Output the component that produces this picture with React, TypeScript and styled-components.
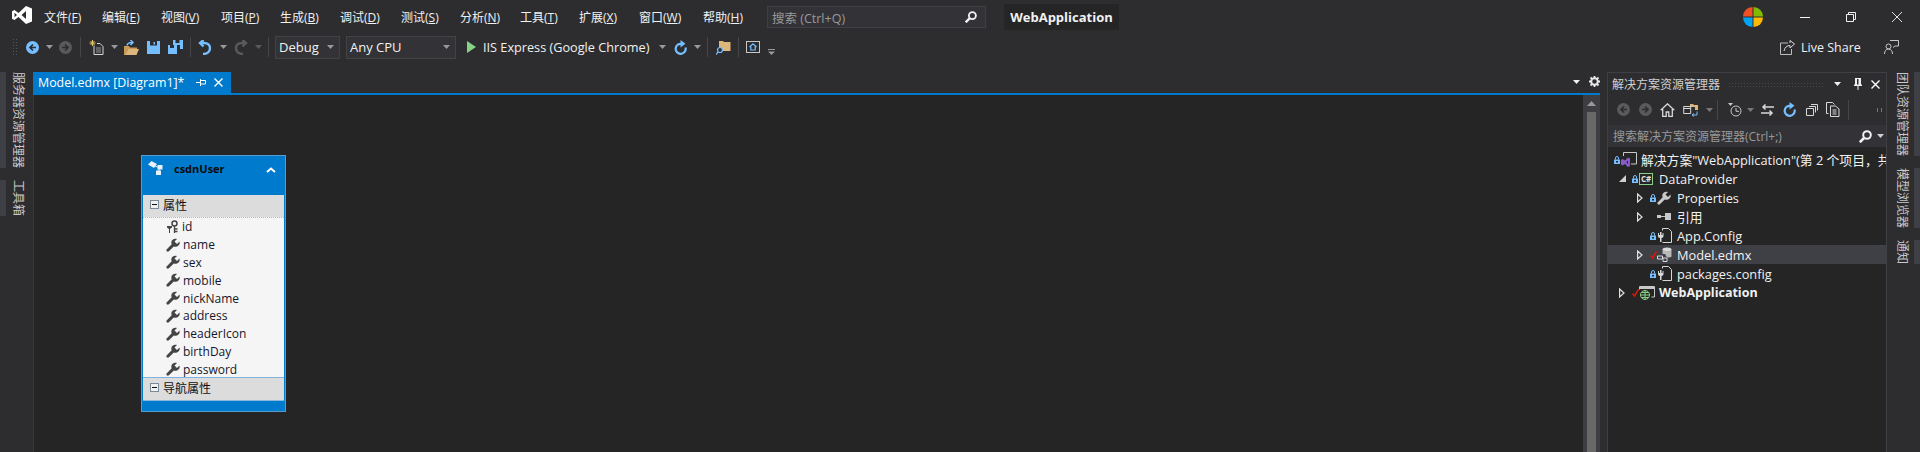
import React from "react";
import styled, { createGlobalStyle } from "styled-components";

const Global = createGlobalStyle`
  html, body { margin: 0; padding: 0; background: #2d2d30; overflow: hidden; }
  body { font-family: "Open Sans", "Noto Sans CJK SC", sans-serif; }
  * { box-sizing: border-box; }
`;

const ui = `"Open Sans", "Noto Sans CJK SC", sans-serif`;

const Window = styled.div`
  width: 1920px; height: 452px; display: flex; flex-direction: column;
  background: #2d2d30; color: #f1f1f1; overflow: hidden; font: 12px ${ui};
`;

const TitleBar = styled.div`
  height: 34px; display: flex; align-items: center; padding-left: 12px; flex: none;
`;
const LogoSlot = styled.div`display: flex; width: 32px; flex: none; margin-top: -4px;`;
const Menu = styled.nav`display: flex; gap: 0; width: 723px; flex: none;`;
const MenuItem = styled.span<{ $w: number }>`
  width: ${(p) => p.$w}px; flex: none; font-size: 12px; color: #f1f1f1; white-space: nowrap;
  u { text-underline-offset: 1px; }
`;
const SearchBox = styled.div`
  width: 219px; height: 22px; flex: none; border: 1px solid #3f3f46; background: #333337;
  display: flex; align-items: center; justify-content: space-between; padding: 0 8px 0 4px;
  color: #999; font-size: 12.5px;
`;
const SolutionName = styled.div`
  margin-left: 18px; width: 115px; height: 26px; background: #252526; flex: none;
  display: flex; align-items: center; justify-content: center;
  font-weight: 700; font-size: 13px; color: #f1f1f1;
`;
const TitleRight = styled.div`margin-left: auto; display: flex; align-items: center;`;
const LogoGap = styled.div`margin-right: 19px; display: flex;`;
const Win = styled.div`width: 46px; display: flex; justify-content: center; flex: none;`;

const ToolBar = styled.div`
  height: 26px; flex: none; display: flex; align-items: center; padding-left: 12px;
`;
const Grip = styled.div`
  width: 5px; height: 18px; margin-right: 9px; flex: none;
  background-image: radial-gradient(#55555a 1px, transparent 1px);
  background-size: 3px 3px;
`;
const Tool = styled.div<{ $w: number; $ml?: number; $dy?: number }>`
  width: ${(p) => p.$w}px; margin-left: ${(p) => p.$ml ?? 0}px; flex: none; height: 22px;
  display: flex; align-items: center; justify-content: center;
  padding-top: ${(p) => p.$dy ?? 0}px;
`;
const Sep = styled.div<{ $l: number; $r: number }>`
  width: 1px; height: 20px; background: #46464a; flex: none;
  margin: 0 ${(p) => p.$r}px 0 ${(p) => p.$l}px;
`;
const Combo = styled.div<{ $w: number; $ml?: number }>`
  width: ${(p) => p.$w}px; height: 23px; flex: none; margin-left: ${(p) => p.$ml ?? 0}px;
  border: 1px solid #434346; background: #333337; display: flex; align-items: center;
  justify-content: space-between; padding: 0 5px 0 3px; font-size: 13px; color: #f1f1f1;
`;
const RunLabel = styled.span`font-size: 12.7px; color: #f1f1f1; white-space: nowrap; margin-left: 7px; width: 171px; flex: none;`;
const LiveBar = styled.div`
  margin-left: auto; display: flex; align-items: center; font-size: 12.5px; color: #f1f1f1;
`;
const LiveText = styled.span`margin: 0 25px 0 6px; width: 58px; white-space: nowrap;`;
const LiveEnd = styled.div`width: 21px; display: flex; flex: none;`;

const Main = styled.div`flex: 1; display: flex; min-height: 0; padding-top: 12px;`;

const Rail = styled.div<{ $right?: boolean }>`
  width: 33px; flex: none; display: flex; flex-direction: column; gap: 12px;
  align-items: ${(p) => (p.$right ? "flex-end" : "flex-start")};
`;
const RailTab = styled.div<{ $right?: boolean }>`
  writing-mode: vertical-rl; text-orientation: sideways;
  font-size: 12px; line-height: 12px; color: #c8c8c8;
  ${(p) =>
    p.$right
      ? `border-right: 6px solid #3f3f46; padding-right: 6px;`
      : `border-left: 6px solid #3f3f46; padding-left: 6px;`}
  align-self: ${(p) => (p.$right ? "flex-end" : "flex-start")};
  white-space: nowrap;
`;

const DocColumn = styled.div`width: 1567px; flex: none; display: flex; flex-direction: column;`;
const TabStrip = styled.div`
  height: 23px; flex: none; display: flex; align-items: stretch; justify-content: space-between;
  border-bottom: 2px solid #007acc;
`;
const DocTab = styled.div`
  width: 198px; height: 23px; background: #007acc; display: flex; align-items: center;
  padding: 0 0 2px 5px; font-size: 12.4px; color: #ffffff; white-space: nowrap; flex: none;
`;
const TabTitle = styled.span`width: 153px; flex: none;`;
const TabBtn = styled.span<{ $w: number }>`width: ${(p) => p.$w}px; flex: none; display: flex; justify-content: center;`;
const StripTools = styled.div`display: flex; align-items: center; padding: 0 0 2px 0; gap: 9px;`;

const DocBody = styled.div`flex: 1; display: flex; min-height: 0;`;
const Canvas = styled.div`
  flex: 1; background: #252526; position: relative; border-left: 1px solid #3a3a3d;
`;
const ScrollTrack = styled.div`
  width: 17px; flex: none; background: #3e3e42; display: flex; flex-direction: column; align-items: center;
`;
const ScrollArrow = styled.div`height: 17px; flex: none; display: flex; align-items: center; justify-content: center;`;
const ScrollThumb = styled.div`width: 9px; flex: 1; background: #686868;`;

const Entity = styled.div`
  position: absolute; left: 107px; top: 60px; width: 145px; height: 257px;
  background: #007acc; border: 1px solid #569ccf; padding: 0 1px; display: flex; flex-direction: column;
`;
const EntityHead = styled.div`
  height: 39px; flex: none; display: flex; align-items: flex-start; padding: 5px 8px 0 5px;
  color: #0a0a0a; font-weight: 700; font-size: 11px;
`;
const EntityName = styled.span`margin-left: 11px; line-height: 15px; flex: 1;`;
const ChevronSlot = styled.span`margin-top: 6px; display: flex;`;
const Section = styled.div<{ $h: number }>`
  height: ${(p) => p.$h}px; flex: none; background: #dcdcdc; display: flex; align-items: center;
  padding: 0 0 3px 7px; color: #111; font-size: 12px; gap: 4px;
`;
const SectionBottom = styled(Section)`
  border-top: 1px solid #7fb3dc; border-bottom: 1px solid #88b7dc;
`;
const Props = styled.div`
  flex: none; height: 160px; background: #f5f5f5; border-top: 1px dotted #b5b5b5;
`;
const Prop = styled.div`
  height: 17.8px; display: flex; align-items: center; padding-left: 23px; gap: 3px;
  color: #15152a; font-size: 12px; white-space: nowrap;
`;

const Panel = styled.div`
  width: 280px; margin-left: 7px; flex: none; background: #252526; border: 1px solid #3f3f46;
  border-bottom: none; display: flex; flex-direction: column;
`;
const PanelHead = styled.div`
  height: 21px; flex: none; background: #2d2d30; display: flex; align-items: center;
  padding: 1px 6px 0 4px; font-size: 12px; color: #d0d0d0;
`;
const PanelDots = styled.div`
  flex: 1; height: 5px; margin: 0 10px 0 8px;
  background-image: radial-gradient(#47474b 0.7px, transparent 0.8px);
  background-size: 3px 3px;
`;
const PanelTools = styled.div`
  height: 31px; flex: none; background: #2d2d30; display: flex; align-items: center; padding-left: 9px;
`;
const Overflow = styled.div`margin-left: auto; margin-right: 4px; display: flex; gap: 3px;`;
const OverflowMark = styled.span`width: 1px; height: 4px; background: #77777a;`;
const PanelSearch = styled.div`
  height: 22px; flex: none; background: #333337; display: flex; align-items: center; justify-content: space-between;
  padding-left: 5px; font-size: 12px; color: #999;
`;
const SearchEnd = styled.div`display: flex; align-items: center; gap: 5px; padding-right: 2px;`;
const Tree = styled.div`flex: 1; padding-top: 3px; overflow: hidden;`;
const Row = styled.div<{ $sel?: boolean; $indent: number }>`
  height: 19px; display: flex; align-items: center; padding-left: ${(p) => p.$indent}px;
  background: ${(p) => (p.$sel ? "#3f3f46" : "transparent")}; white-space: nowrap;
  color: #f1f1f1; overflow: hidden;
`;
const Arrow = styled.span`width: 13px; flex: none; display: flex; justify-content: flex-start;`;
const StateIcon = styled.span`width: 7px; flex: none; display: flex; justify-content: flex-start;`;
const NodeIcon = styled.span`width: 18px; flex: none; display: flex; justify-content: flex-start; margin-right: 2px;`;
const RowText = styled.span<{ $bold?: boolean }>`
  font-size: ${(p) => (p.$bold ? 12.5 : 12.8)}px; font-weight: ${(p) => (p.$bold ? 700 : 400)};
`;

const blue = "#75beff";

const VsLogo = () => (
  <svg width="20" height="18" viewBox="0 0 20 18">
    <path fill="#fff" fillRule="evenodd" d="M14 0l6 2.5v13L14 18l-7.500-7-4 3L0 12.700V5.300L2.500 4l4 3zM2.500 6.700v4.600L5 9zM14 5 9.500 9l4.500 4z" />
  </svg>
);
const Caret = ({ c = "#999" }: { c?: string }) => (
  <svg width="7" height="4" viewBox="0 0 7 4"><path fill={c} d="M0 0h7L3.500 4z" /></svg>
);
const Back = ({ flip, dim }: { flip?: boolean; dim?: boolean }) => (
  <svg width="13" height="13" viewBox="0 0 13 13" style={flip ? { transform: "scaleX(-1)" } : undefined}>
    <circle cx="6.500" cy="6.500" r="6.500" fill={dim ? "#5a5a5d" : blue} />
    <path d="M7 3.500 4 6.500l3 3M4.300 6.500H10" stroke="#2d2d30" strokeWidth="1.700" fill="none" />
  </svg>
);
const NewProj = () => (
  <svg width="15" height="15" viewBox="0 0 15 15" fill="none">
    <path d="M5 5.500V14.500h9V6.500L11 3.500H8" stroke="#d8d8d8" />
    <path d="M7 8h5M7 10h5M7 12h5" stroke="#999" />
    <path d="M3.500 0v6M.5 3h6M1.500 1l4 4M5.500 1l-4 4" stroke="#e8c46a" />
  </svg>
);
const OpenFolder = () => (
  <svg width="15" height="15" viewBox="0 0 15 15">
    <path fill="#c79a55" d="M0 6h5l1 1.500h7V9H4l-2 6H0z" />
    <path fill="#dcb67a" d="M4 9h11l-2.500 6H1.500z" />
    <path d="M3 5.500C3.500 3 5 2.500 8 2.500M6.500 0l2.500 2.500L6.500 5" stroke={blue} strokeWidth="1.500" fill="none" />
  </svg>
);
const Save = () => (
  <svg width="13" height="13" viewBox="0 0 13 13">
    <path fillRule="evenodd" fill={blue} d="M0 0h13v13H0zM3 0v4.500h7V0zM6.500 1H8v2.500H6.500z" />
  </svg>
);
const SaveAll = () => (
  <svg width="15" height="14" viewBox="0 0 15 14">
    <path fillRule="evenodd" fill={blue} d="M5 0h10v9h-3V5H5zM7.500 0v3h4V0zM0 5h9v9H0zM2 5v3h4V5z" />
  </svg>
);
const Undo = ({ dim }: { dim?: boolean }) => (
  <svg width="14" height="15" viewBox="0 0 14 15" fill="none" style={dim ? { transform: "scaleX(-1)" } : undefined}>
    <path d="M5 14c5 0 7-3 7-6S10 3 6 3H2M5.500 0 2 3l3.500 3.500" stroke={dim ? "#5a5a5d" : blue} strokeWidth="2.400" />
  </svg>
);
const Play = () => <svg width="9" height="12" viewBox="0 0 9 12"><path fill="#89d185" d="M0 0l9 6-9 6z" /></svg>;
const Refresh = () => (
  <svg width="13" height="15" viewBox="0 0 13 15" fill="none">
    <path d="M8 4a5 5 0 1 0 3.500 3.500" stroke={blue} strokeWidth="2.200" />
    <path fill={blue} d="M6.500 0v7.500l5-3.800z" />
  </svg>
);
const FolderFind = () => (
  <svg width="15" height="15" viewBox="0 0 15 15">
    <path fill="#dcb67a" d="M3 1h4l1 1h6.500v9H3z" />
    <circle cx="4" cy="10" r="2.500" fill="#2d2d30" stroke={blue} strokeWidth="1.200" />
    <path d="M2 12 0 14.500" stroke={blue} strokeWidth="1.400" />
  </svg>
);
const HomeFrame = () => (
  <svg width="14" height="12" viewBox="0 0 14 12" fill="none">
    <rect x="0.5" y="0.5" width="13" height="11" stroke="#c8c8c8" />
    <path d="M3.500 6 7 2.800 10.500 6M4.800 5.500v3.500h4.400V5.500" stroke={blue} strokeWidth="1.200" />
  </svg>
);
const More = () => (
  <svg width="7" height="6" viewBox="0 0 7 6"><path fill="#999" d="M0 0h7v1H0zM0 2.500h7L3.500 6z" /></svg>
);
const MsLogo = () => (
  <svg width="20" height="20" viewBox="0 0 20 20">
    <path fill="#f25022" d="M9.500 0v9.500H0A9.500 9.500 0 0 1 9.500 0z" />
    <path fill="#7fba00" d="M10.500 0A9.500 9.500 0 0 1 20 9.500h-9.500z" />
    <path fill="#00a4ef" d="M0 10.500h9.500V20A9.500 9.500 0 0 1 0 10.500z" />
    <path fill="#ffb900" d="M10.500 10.500H20A9.500 9.500 0 0 1 10.500 20z" />
  </svg>
);
const Minimize = () => <svg width="10" height="10" viewBox="0 0 10 10"><path d="M0 5.500h10" stroke="#f1f1f1" /></svg>;
const Restore = () => (
  <svg width="10" height="10" viewBox="0 0 10 10" fill="none">
    <path d="M.5 2.500h7v7h-7zM2.500 2.500v-2h7v7h-2" stroke="#f1f1f1" />
  </svg>
);
const CloseWin = () => <svg width="10" height="10" viewBox="0 0 10 10"><path d="M0 0l10 10M10 0 0 10" stroke="#e0e0e0" /></svg>;
const Share = () => (
  <svg width="15" height="15" viewBox="0 0 15 15" fill="none">
    <path d="M8 3H.5v11.500h11V9" stroke="#bdbdbd" />
    <path d="M4 11c.5-3.500 3-5.500 6-5.500V8l4.500-4L10 .5V3" stroke="#d8d8d8" />
  </svg>
);
const Feedback = () => (
  <svg width="15" height="15" viewBox="0 0 15 15" fill="none" stroke="#c8c8c8">
    <path d="M6 .5h8.500V6H11L9 7.500" />
    <circle cx="4.500" cy="6.500" r="2.500" />
    <path d="M.5 14c0-3 1.500-5 4-5s4 2 4 5" />
  </svg>
);
const Magnifier = ({ c = "#f1f1f1", size = 13 }: { c?: string; size?: number }) => (
  <svg width={size} height={size} viewBox="0 0 13 13" fill="none">
    <circle cx="8" cy="5" r="3.800" stroke={c} strokeWidth="2" />
    <path d="M5 8 .8 12.200" stroke={c} strokeWidth="2.600" />
  </svg>
);
const Pin = () => (
  <svg width="11" height="7" viewBox="0 0 11 7" fill="none" stroke="#fff">
    <path d="M4.500 1.500h5v3.500h-5zM4.500 3.500H0M4.500 0v7" />
  </svg>
);
const X = ({ c = "#fff", size = 9 }: { c?: string; size?: number }) => (
  <svg width={size} height={size} viewBox="0 0 9 9"><path d="M.5.500l8 8M8.500.500l-8 8" stroke={c} strokeWidth="1.400" /></svg>
);
const Gear = () => (
  <svg width="11" height="11" viewBox="0 0 11 11">
    <circle cx="5.500" cy="5.500" r="3.300" fill="none" stroke="#e8e8e8" strokeWidth="2" />
    <path d="M5.500 0v2M5.500 9v2M0 5.500h2M9 5.500h2M1.500 1.500l1.400 1.400M8.100 8.100l1.400 1.400M9.500 1.500 8.100 2.900M2.900 8.100 1.500 9.500" stroke="#e8e8e8" strokeWidth="1.800" />
  </svg>
);
const PinV = () => (
  <svg width="8" height="12" viewBox="0 0 8 12"><path fill="#eee" fillRule="evenodd" d="M1 0h6v6.500h1V8H4.500v4h-1V8H0V6.500h1zM3 1v5.500h1.500V1z" /></svg>
);
const Home = () => (
  <svg width="15" height="14" viewBox="0 0 15 14" fill="none" stroke="#d8d8d8" strokeWidth="1.300">
    <path d="M.7 7.300 7.500.8l6.800 6.500M2.700 6v7.400h3.500V9h2.600v4.400h3.500V6" />
  </svg>
);
const SwitchViews = () => (
  <svg width="15" height="14" viewBox="0 0 15 14" fill="none">
    <path fill="#dcb67a" d="M7 1h3l1 1h4v5h-3V4H7z" />
    <path d="M.7 3.500h7v7h-7zM.7 5.500h7" stroke="#d8d8d8" />
    <path d="M9 12h5V8.500M11 10.500 9 12l2 1.500" stroke={blue} />
  </svg>
);
const History = () => (
  <svg width="14" height="15" viewBox="0 0 14 15" fill="none" stroke="#c8c8c8">
    <circle cx="8" cy="9" r="5" />
    <path d="M8 6v3.300h3" />
    <path d="M0 1h5L2.500 4z" fill="#c8c8c8" stroke="none" />
  </svg>
);
const Sync = () => (
  <svg width="13" height="12" viewBox="0 0 13 12" fill="none" stroke="#d8d8d8" strokeWidth="1.500">
    <path d="M13 3H2M4.500.500 2 3l2.500 2.500M0 9h11M8.500 6.500 11 9l-2.500 2.500" />
  </svg>
);
const Collapse = () => (
  <svg width="12" height="12" viewBox="0 0 12 12" fill="none" stroke="#d8d8d8">
    <path d="M.5 4.500h7v7h-7zM3 2.500h6.500v6M5 .5h6.500v6" />
  </svg>
);
const Docs = () => (
  <svg width="14" height="15" viewBox="0 0 14 15" fill="none" stroke="#d8d8d8">
    <path d="M4.500 4h5l3.500 3v7.500H4.500zM2.500 11.500h-2V.500h6l2 2" />
    <path d="M6.500 8h4M6.500 10h4M6.500 12h4" />
  </svg>
);
const Lock = () => (
  <svg width="6" height="8" viewBox="0 0 6 8">
    <path fill="none" stroke={blue} d="M1.500 3.500V2a1.500 1.500 0 0 1 3 0v1.500" />
    <path fillRule="evenodd" fill={blue} d="M0 3.500h6V8H0zM2 5v1.500h2V5z" />
  </svg>
);
const Check = () => (
  <svg width="7" height="8" viewBox="0 0 7 8"><path d="M.5 4.500 2.500 7 6.500.5" stroke="#e51400" strokeWidth="1.500" fill="none" /></svg>
);
const Solid = () => <svg width="7" height="7" viewBox="0 0 7 7"><path fill="#d0d0d0" d="M7 0v7H0z" /></svg>;
const Hollow = () => <svg width="6" height="10" viewBox="0 0 6 10"><path fill="none" stroke="#e0e0e0" strokeWidth="1.200" d="M.6 1 5 5 .6 9z" /></svg>;
const SolutionIcon = () => (
  <svg width="16" height="15" viewBox="0 0 16 15" fill="none">
    <path d="M2.500 4V.5h13V12H10" stroke="#c8c8c8" />
    <path fill="#8a5cc8" d="M0 8l1.500-1L4 8.500l3-3 2 1V14l-2 1-3-3-2.500 1.500L0 12.500z" />
    <path fill="#252526" d="M7 8.500 5.300 10.200 7 12z" />
  </svg>
);
const CsIcon = () => (
  <svg width="14" height="12" viewBox="0 0 14 12" fill="none">
    <rect x="0.5" y="0.5" width="13" height="11" stroke="#89d185" />
    <text x="2" y="9" fontSize="8" fill="#e0e0e0" fontFamily="Open Sans" fontWeight="700">C#</text>
  </svg>
);
const Wrench = ({ c = "#c8c8c8" }: { c?: string }) => (
  <svg width="14" height="14" viewBox="0 0 14 14">
    <path fill={c} d="M13.500 3.500 11 6 8.500 3.500 11 1C8.500 0 5.500 1.500 5.300 4.300c0 .8.100 1.400.4 2L.8 11.200c-.6.600-.6 1.500 0 2.100.6.600 1.500.6 2.100 0l4.900-4.900c.7.300 1.500.4 2.300.3 2.600-.4 4.200-2.800 3.400-5.200z" />
  </svg>
);
const RefIcon = () => (
  <svg width="14" height="7" viewBox="0 0 14 7"><path fill="#c8c8c8" d="M0 2h4v3H0zM4 3h4v1H4zM8 0h6v7H8z" /></svg>
);
const ConfigIcon = () => (
  <svg width="16" height="15" viewBox="0 0 16 15" fill="none">
    <path d="M5.500 2.500V.5h6l3 3v11h-9" stroke="#d8d8d8" />
    <path d="M1 5v3c0 1 1 2 2 2v4h1.500v-4c1 0 2-1 2-2V5H5.500v2h-1V4H3v3H2V5z" fill="#d8d8d8" />
  </svg>
);
const EdmxIcon = () => (
  <svg width="16" height="15" viewBox="0 0 16 15">
    <ellipse cx="10" cy="2.500" rx="4.500" ry="2" fill="#d8d8d8" />
    <path fill="#b8b8b8" d="M5.500 3c1 1.500 8 1.500 9 0v6.500c-1 1-3 1.200-4.500 1L8 7H5.500z" />
    <path d="M.5 9h5v3h-5zM6 11h4v3.500H6z" fill="none" stroke="#d8d8d8" />
  </svg>
);
const WebIcon = () => (
  <svg width="16" height="15" viewBox="0 0 16 15" fill="none">
    <path d="M.5 4.500v-3h15V12h-3" stroke="#c8c8c8" />
    <path d="M.5 3h15" stroke="#c8c8c8" strokeWidth="2" />
    <circle cx="6" cy="10" r="4.500" stroke="#89d185" />
    <path d="M1.500 10h9M6 5.500v9M2.500 7.500h7M2.500 12.500h7" stroke="#89d185" />
  </svg>
);
const EntityIcon = () => (
  <svg width="15" height="14" viewBox="0 0 15 14">
    <path fill="#e8f0f8" d="M0 3.500 3.500 0 9 3 6 7zM9.500 4h5v4.500h-5zM8 9.500h5V14H8z" />
    <path d="M6 4.500l4.500 2M11 8v2" stroke="#e8f0f8" />
  </svg>
);
const ChevronUp = () => (
  <svg width="10" height="6" viewBox="0 0 10 6"><path d="M1 5l4-3.500L9 5" stroke="#fff" strokeWidth="2" fill="none" /></svg>
);
const Minus = () => (
  <svg width="9" height="9" viewBox="0 0 9 9">
    <rect x="0.5" y="0.5" width="8" height="8" fill="#f0f0f0" stroke="#7a8a99" />
    <path d="M2 4.500h5" stroke="#111" />
  </svg>
);
const KeyIcon = () => (
  <svg width="13" height="13" viewBox="0 0 13 13">
    <circle cx="8.500" cy="3.500" r="2.500" fill="none" stroke="#444" strokeWidth="1.500" />
    <path d="M8.500 6v7M8.500 9h3M8.500 11.500h3" stroke="#444" strokeWidth="1.300" />
    <path fill="#444" d="M1 6h5v1.500L4 9v4H3V9L1 7.500z" />
  </svg>
);

const menus: [string, string, number][] = [
  ["文件", "F", 58], ["编辑", "E", 59], ["视图", "V", 60], ["项目", "P", 59], ["生成", "B", 60],
  ["调试", "D", 61], ["测试", "S", 59], ["分析", "N", 60], ["工具", "T", 59], ["扩展", "X", 60],
  ["窗口", "W", 64], ["帮助", "H", 64],
];
const fields = ["name", "sex", "mobile", "nickName", "address", "headerIcon", "birthDay", "password"];

export default function App() {
  return (
    <Window>
      <Global />
      <TitleBar>
        <LogoSlot><VsLogo /></LogoSlot>
        <Menu>
          {menus.map(([t, k, w]) => (
            <MenuItem key={k} $w={w}>{t}(<u>{k}</u>)</MenuItem>
          ))}
        </Menu>
        <SearchBox><span>搜索 (Ctrl+Q)</span><Magnifier size={12} /></SearchBox>
        <SolutionName>WebApplication</SolutionName>
        <TitleRight>
          <LogoGap><MsLogo /></LogoGap>
          <Win><Minimize /></Win>
          <Win><Restore /></Win>
          <Win><CloseWin /></Win>
        </TitleRight>
      </TitleBar>
      <ToolBar>
        <Grip />
        <Tool $w={13}><Back /></Tool>
        <Tool $w={20}><Caret /></Tool>
        <Tool $w={13}><Back flip dim /></Tool>
        <Sep $l={8} $r={8} />
        <Tool $w={15}><NewProj /></Tool>
        <Tool $w={20}><Caret /></Tool>
        <Tool $w={15}><OpenFolder /></Tool>
        <Tool $w={13} $ml={8}><Save /></Tool>
        <Tool $w={15} $ml={8}><SaveAll /></Tool>
        <Sep $l={7} $r={7} />
        <Tool $w={14}><Undo /></Tool>
        <Tool $w={22}><Caret /></Tool>
        <Tool $w={14}><Undo dim /></Tool>
        <Tool $w={20}><Caret c="#5a5a5d" /></Tool>
        <Sep $l={0} $r={6} />
        <Combo $w={65}><span>Debug</span><Caret /></Combo>
        <Combo $w={110} $ml={6}><span>Any CPU</span><Caret /></Combo>
        <Tool $w={9} $ml={11}><Play /></Tool>
        <RunLabel>IIS Express (Google Chrome)</RunLabel>
        <Tool $w={16}><Caret /></Tool>
        <Tool $w={13} $ml={4}><Refresh /></Tool>
        <Tool $w={20}><Caret /></Tool>
        <Sep $l={0} $r={8} />
        <Tool $w={15}><FolderFind /></Tool>
        <Sep $l={7} $r={7} />
        <Tool $w={14}><HomeFrame /></Tool>
        <Tool $w={7} $ml={8} $dy={10}><More /></Tool>
        <LiveBar>
          <Share />
          <LiveText>Live Share</LiveText>
          <Feedback />
          <LiveEnd />
        </LiveBar>
      </ToolBar>
      <Main>
        <Rail>
          <RailTab>服务器资源管理器</RailTab>
          <RailTab>工具箱</RailTab>
        </Rail>
        <DocColumn>
          <TabStrip>
            <DocTab>
              <TabTitle>Model.edmx [Diagram1]*</TabTitle>
              <TabBtn $w={20}><Pin /></TabBtn>
              <TabBtn $w={15}><X /></TabBtn>
            </DocTab>
            <StripTools>
              <Caret c="#f1f1f1" />
              <Gear />
            </StripTools>
          </TabStrip>
          <DocBody>
            <Canvas>
              <Entity>
                <EntityHead>
                  <EntityIcon />
                  <EntityName>csdnUser</EntityName>
                  <ChevronSlot><ChevronUp /></ChevronSlot>
                </EntityHead>
                <Section $h={22}><Minus />属性</Section>
                <Props>
                  <Prop><KeyIcon />id</Prop>
                  {fields.map((f) => (
                    <Prop key={f}><Wrench c="#444" />{f}</Prop>
                  ))}
                </Props>
                <SectionBottom $h={24}><Minus />导航属性</SectionBottom>
              </Entity>
            </Canvas>
            <ScrollTrack>
              <ScrollArrow><svg width="9" height="5" viewBox="0 0 9 5"><path fill="#999" d="M4.500 0 9 5H0z" /></svg></ScrollArrow>
              <ScrollThumb />
            </ScrollTrack>
          </DocBody>
        </DocColumn>
        <Panel>
          <PanelHead>
            <span>解决方案资源管理器</span>
            <PanelDots />
            <Caret c="#f1f1f1" />
            <Tool $w={8} $ml={13}><PinV /></Tool>
            <Tool $w={9} $ml={9}><X /></Tool>
          </PanelHead>
          <PanelTools>
            <Tool $w={13}><Back dim /></Tool>
            <Tool $w={13} $ml={9}><Back flip dim /></Tool>
            <Tool $w={15} $ml={8}><Home /></Tool>
            <Tool $w={15} $ml={8}><SwitchViews /></Tool>
            <Tool $w={7} $ml={8}><Caret c="#777" /></Tool>
            <Sep $l={4} $r={10} />
            <Tool $w={14}><History /></Tool>
            <Tool $w={7} $ml={5}><Caret c="#777" /></Tool>
            <Tool $w={13} $ml={7}><Sync /></Tool>
            <Tool $w={13} $ml={9}><Refresh /></Tool>
            <Tool $w={12} $ml={10}><Collapse /></Tool>
            <Tool $w={14} $ml={8}><Docs /></Tool>
            <Sep $l={8} $r={0} />
            <Overflow><OverflowMark /><OverflowMark /></Overflow>
          </PanelTools>
          <PanelSearch>
            <span>搜索解决方案资源管理器(Ctrl+;)</span>
            <SearchEnd><Magnifier size={13} /><Caret c="#d0d0d0" /></SearchEnd>
          </PanelSearch>
          <Tree>
            <Row $indent={6}>
              <StateIcon><Lock /></StateIcon>
              <NodeIcon><SolutionIcon /></NodeIcon>
              <RowText>解决方案"WebApplication"(第 2 个项目，共 2 个)</RowText>
            </Row>
            <Row $indent={11}>
              <Arrow><Solid /></Arrow>
              <StateIcon><Lock /></StateIcon>
              <NodeIcon><CsIcon /></NodeIcon>
              <RowText>DataProvider</RowText>
            </Row>
            <Row $indent={29}>
              <Arrow><Hollow /></Arrow>
              <StateIcon><Lock /></StateIcon>
              <NodeIcon><Wrench /></NodeIcon>
              <RowText>Properties</RowText>
            </Row>
            <Row $indent={29}>
              <Arrow><Hollow /></Arrow>
              <StateIcon />
              <NodeIcon><RefIcon /></NodeIcon>
              <RowText>引用</RowText>
            </Row>
            <Row $indent={42}>
              <StateIcon><Lock /></StateIcon>
              <NodeIcon><ConfigIcon /></NodeIcon>
              <RowText>App.Config</RowText>
            </Row>
            <Row $indent={29} $sel>
              <Arrow><Hollow /></Arrow>
              <StateIcon><Check /></StateIcon>
              <NodeIcon><EdmxIcon /></NodeIcon>
              <RowText>Model.edmx</RowText>
            </Row>
            <Row $indent={42}>
              <StateIcon><Lock /></StateIcon>
              <NodeIcon><ConfigIcon /></NodeIcon>
              <RowText>packages.config</RowText>
            </Row>
            <Row $indent={11}>
              <Arrow><Hollow /></Arrow>
              <StateIcon><Check /></StateIcon>
              <NodeIcon><WebIcon /></NodeIcon>
              <RowText $bold>WebApplication</RowText>
            </Row>
          </Tree>
        </Panel>
        <Rail $right>
          <RailTab $right>团队资源管理器</RailTab>
          <RailTab $right>模型浏览器</RailTab>
          <RailTab $right>通知</RailTab>
        </Rail>
      </Main>
    </Window>
  );
}
